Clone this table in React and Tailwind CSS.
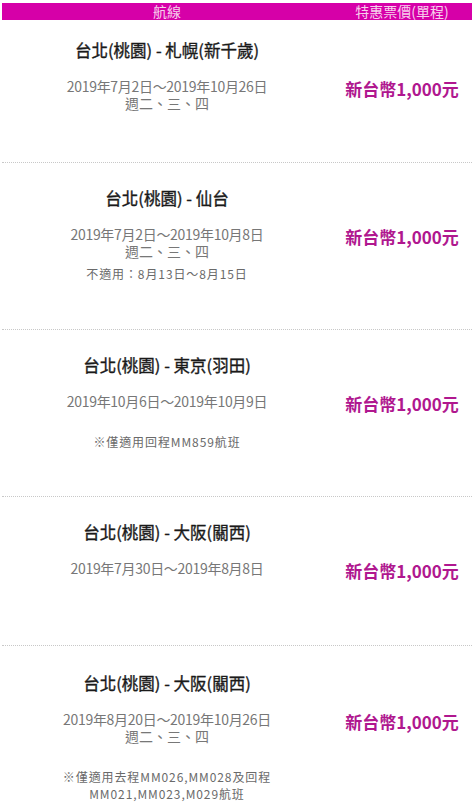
import React from 'react';

const FONT = { fontFamily: '"Noto Sans CJK TC", "Noto Sans", sans-serif' };

const ROUTES = [
  {
    id: 'cts',
    title: '台北(桃園) - 札幌(新千歲)',
    date: '2019年7月2日～2019年10月26日',
    days: '週二、三、四',
    notes: [],
    height: 'h-[143px]',
    top: 'pt-[20px]',
    priceTop: 'pt-[58px]',
    noteGap: 'mt-[5px]',
  },
  {
    id: 'sdj',
    title: '台北(桃園) - 仙台',
    date: '2019年7月2日～2019年10月8日',
    days: '週二、三、四',
    notes: ['不適用：8月13日～8月15日'],
    height: 'h-[167px]',
    top: 'pt-[25px]',
    priceTop: 'pt-[63px]',
    noteGap: 'mt-[5px]',
  },
  {
    id: 'hnd',
    title: '台北(桃園) - 東京(羽田)',
    date: '2019年10月6日～2019年10月9日',
    days: '',
    notes: ['※僅適用回程MM859航班'],
    height: 'h-[167px]',
    top: 'pt-[25px]',
    priceTop: 'pt-[63px]',
    noteGap: 'mt-[6px]',
  },
  {
    id: 'kix-1',
    title: '台北(桃園) - 大阪(關西)',
    date: '2019年7月30日～2019年8月8日',
    days: '',
    notes: [],
    height: 'h-[149px]',
    top: 'pt-[25px]',
    priceTop: 'pt-[63px]',
    noteGap: 'mt-[5px]',
  },
  {
    id: 'kix-2',
    title: '台北(桃園) - 大阪(關西)',
    date: '2019年8月20日～2019年10月26日',
    days: '週二、三、四',
    notes: ['※僅適用去程MM026,MM028及回程', 'MM021,MM023,M029航班'],
    height: 'h-[170px]',
    top: 'pt-[27px]',
    priceTop: 'pt-[65px]',
    noteGap: 'mt-[23px]',
  },
];

function RouteRow({ route }) {
  return (
    <div className={`grid grid-cols-[330px_1fr] border-b border-dotted border-[#c8c8c8] ${route.height}`}>
      <div className={`flex flex-col items-center text-center ${route.top}`}>
        <p className="text-[16.5px] leading-[20px] font-normal text-[#1a1a1a] [-webkit-text-stroke:0.35px_#1a1a1a]">{route.title}</p>
        <p className="mt-[18px] text-[14px] leading-[17px] text-[#777] tracking-[-0.3px]">{route.date}</p>
        <p className="text-[14px] leading-[17px] text-[#777] h-[17px]">{route.days}</p>
        {route.notes.length > 0 && (
          <div className={route.noteGap}>
            {route.notes.map((n) => (
              <p key={n} className="text-[12px] leading-[17px] text-[#6a6a6a] tracking-[0.9px]">{n}</p>
            ))}
          </div>
        )}
      </div>
      <div className={`text-center ${route.priceTop}`}>
        <p className="text-[17px] leading-[22px] font-bold text-[#b0178f]">新台幣1,000元</p>
      </div>
    </div>
  );
}

export default function App() {
  return (
    <div className="w-[474px] min-h-[802px] bg-white px-[2px] pt-[3px] overflow-hidden" style={FONT}>
      <div className="grid grid-cols-[330px_1fr] h-[17px] bg-[#d600a8] text-[#f6d0ec] text-[14px] leading-[17px]">
        <div className="text-center">航線</div>
        <div className="text-center">特惠票價(單程)</div>
      </div>
      {ROUTES.map((r) => (
        <RouteRow key={r.id} route={r} />
      ))}
    </div>
  );
}
